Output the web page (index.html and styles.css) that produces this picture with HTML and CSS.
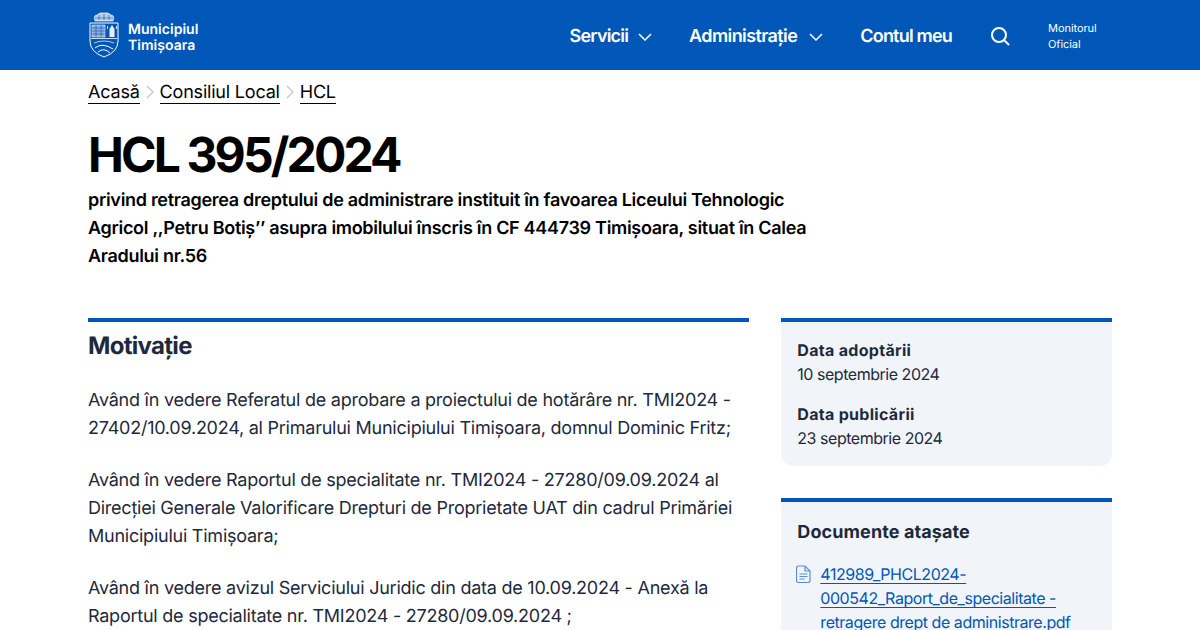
FILE: index.html
```html
<!DOCTYPE html>
<html lang="ro">
<head>
    <meta charset="UTF-8">
    <meta name="viewport" content="width=device-width, initial-scale=1.0">
    <title>HCL 395/2024 - Municipiul Timișoara</title>
    <link rel="stylesheet" href="styles.css">
</head>
<body>

    <header class="site-header">
        <div class="container header-inner">
            <a href="#" class="brand">
                <svg class="brand-crest" width="32" height="48" viewBox="0 0 32 48" fill="none" stroke="#fff">
                    <path d="M7 10 Q5 4 9 4 Q12 1 16 2 Q20 1 23 4 Q27 4 25 10 Z" fill="#b9cde9" stroke-width="0.6"/>
                    <path d="M7 7h18M11 4v5M16 3v6M21 4v5" stroke="#0057b8" stroke-width="0.6"/>
                    <path d="M2 12 H30 V30 Q30 41 16 46 Q2 41 2 30 Z" stroke-width="1"/>
                    <path d="M4 14 H17 V26 H4 Z" fill="#8fb0dd" stroke-width="0.5"/>
                    <path d="M4 17h13M4 20h13M4 23h13M8 14v12M13 14v12" stroke="#0057b8" stroke-width="0.6"/>
                    <path d="M24 14 L26.500 18 V26 H21.500 V18 Z" fill="#e8eff9" stroke="none"/>
                    <path d="M19.500 15v3M28.500 15v3" stroke-width="0.8"/>
                    <path d="M3 27.500 H29" stroke-width="0.8"/>
                    <path d="M6 32 Q16 28 26 32" stroke-width="0.7"/>
                    <path d="M7 37 Q14 31 25 38 M10 41 Q16 36 22 42" stroke-width="1"/>
                </svg>
                <span class="brand-name">Municipiul<br>Timișoara</span>
            </a>
            <nav class="main-nav">
                <a href="#" class="nav-link nav-services"><span>Servicii</span>
                    <svg width="14" height="8" viewBox="0 0 14 8" fill="none" stroke="#fff" stroke-width="1.5"><path d="M1 1l6 6 6-6"/></svg>
                </a>
                <a href="#" class="nav-link nav-admin"><span>Administrație</span>
                    <svg width="14" height="8" viewBox="0 0 14 8" fill="none" stroke="#fff" stroke-width="1.5"><path d="M1 1l6 6 6-6"/></svg>
                </a>
                <a href="#" class="nav-link nav-account">Contul meu</a>
                <a href="#" class="nav-search">
                    <svg width="20" height="20" viewBox="0 0 20 20" fill="none" stroke="#fff" stroke-width="2"><circle cx="9" cy="9" r="7"/><path d="M14 14l5 5"/></svg>
                </a>
                <a href="#" class="nav-monitor">Monitorul<br>Oficial</a>
            </nav>
        </div>
    </header>

    <main class="container">
        <div class="breadcrumbs">
            <a href="#">Acasă</a>
            <svg width="8" height="14" viewBox="0 0 8 14" fill="none" stroke="#c4c4c4" stroke-width="1.3"><path d="M1 1l6 6-6 6"/></svg>
            <a href="#">Consiliul Local</a>
            <svg width="8" height="14" viewBox="0 0 8 14" fill="none" stroke="#c4c4c4" stroke-width="1.3"><path d="M1 1l6 6-6 6"/></svg>
            <a href="#">HCL</a>
        </div>

        <h1 class="page-title">HCL 395/2024</h1>
        <p class="page-subtitle">privind retragerea dreptului de administrare instituit în favoarea Liceului Tehnologic Agricol ,,Petru Botiș’’ asupra imobilului înscris în CF 444739 Timișoara, situat în Calea Aradului nr.56</p>

        <div class="content-grid">
            <section class="motivation">
                <h2>Motivație</h2>
                <p>Având în vedere Referatul de aprobare a proiectului de hotărâre nr. TMI2024 - 27402/10.09.2024, al Primarului Municipiului Timișoara, domnul Dominic Fritz;</p>
                <p>Având în vedere Raportul de specialitate nr. TMI2024 - 27280/09.09.2024 al Direcției Generale Valorificare Drepturi de Proprietate UAT din cadrul Primăriei Municipiului Timișoara;</p>
                <p>Având în vedere avizul Serviciului Juridic din data de 10.09.2024 - Anexă la Raportul de specialitate nr. TMI2024 - 27280/09.09.2024 ;</p>
            </section>

            <aside class="sidebar">
                <div class="info-card dates-card">
                    <dl>
                        <dt>Data adoptării</dt>
                        <dd>10 septembrie 2024</dd>
                        <dt>Data publicării</dt>
                        <dd>23 septembrie 2024</dd>
                    </dl>
                </div>
                <div class="info-card docs-card">
                    <h3>Documente atașate</h3>
                    <div class="doc-item">
                        <svg width="15" height="18" viewBox="0 0 15 18" fill="none" stroke="#5a8fd6" stroke-width="1.2"><path d="M2.500 1H9l5 5v9.500a2 2 0 0 1-2 2H2.500a2 2 0 0 1-2-2V3a2 2 0 0 1 2-2Z"/><path d="M9 1v5h5M3.500 9h8M3.500 11.500h8M3.500 14h5"/></svg>
                        <a href="#">412989_PHCL2024-000542_Raport_de_specialitate - retragere drept de administrare.pdf</a>
                    </div>
                </div>
            </aside>
        </div>
    </main>

</body>
</html>
```

FILE: styles.css
```css
html, body {
    height: 630px;
    overflow: hidden;
}
body {
    margin: 0;
    font-family: 'Inter', 'Liberation Sans', sans-serif;
    color: #1e293b;
    background-color: #fff;
    text-rendering: geometricPrecision;
}
a {
    color: inherit;
    text-decoration: none;
}
.container {
    width: 1024px;
    margin: 0 auto;
}

/* Header */
.site-header {
    height: 70px;
    background-color: #0057b8;
    color: #fff;
}
.header-inner {
    height: 70px;
    display: flex;
    align-items: center;
    justify-content: space-between;
}
.brand {
    display: flex;
    align-items: center;
    gap: 8px;
}
.brand-name {
    margin-top: 6px;
    font-size: 14px;
    line-height: 16px;
    font-weight: 600;
    letter-spacing: 0.02px;
}
.main-nav {
    display: flex;
    align-items: center;
}
.nav-link {
    display: flex;
    align-items: center;
    gap: 10px;
    padding-top: 2px;
    font-size: 18px;
    font-weight: 600;
    letter-spacing: -0.8px;
}
.nav-link svg {
    margin-top: 1px;
}
.nav-services {
    margin-right: 37px;
}
.nav-admin {
    gap: 12px;
    margin-right: 37px;
    letter-spacing: -0.6px;
}
.nav-account {
    margin-right: 38px;
}
.nav-search {
    display: flex;
    margin-top: 2px;
    margin-right: 38px;
}
.nav-monitor {
    width: 64px;
    margin-top: 2px;
    font-size: 11px;
    line-height: 16px;
    letter-spacing: -0.05px;
}

/* Breadcrumbs */
.breadcrumbs {
    height: 24px;
    margin-top: 10px;
    display: flex;
    align-items: center;
    gap: 6px;
    font-size: 18px;
    letter-spacing: -0.2px;
    color: #000;
}
.breadcrumbs a {
    padding-top: 1px;
    line-height: 21px;
    border-bottom: 1px solid #000;
}

/* Title */
.page-title {
    margin: 23px 0 0;
    font-size: 48px;
    line-height: 56px;
    font-weight: 700;
    letter-spacing: -2.85px;
    color: #000;
}
.page-subtitle {
    width: 740px;
    margin: 4px 0 0;
    font-size: 18px;
    line-height: 28px;
    font-weight: 600;
    letter-spacing: -0.3px;
    color: #000;
}

/* Content */
.content-grid {
    margin-top: 47px;
    display: grid;
    grid-template-columns: 2fr 1fr;
    gap: 32px;
}
.motivation {
    border-top: 4px solid #0057b8;
}
.motivation h2 {
    margin: 6px 0 -1px;
    font-size: 24px;
    line-height: 36px;
    font-weight: 700;
    letter-spacing: -0.7px;
}
.motivation p {
    margin: 24px 0 0;
    font-size: 18px;
    line-height: 28px;
    letter-spacing: -0.24px;
}
.sidebar {
    display: flex;
    flex-direction: column;
    gap: 32px;
}
.info-card {
    background-color: #f1f5f9;
    border-top: 4px solid #0057b8;
    padding: 16px;
}
.dates-card {
    border-radius: 0 0 12px 12px;
}
.info-card dl {
    margin: 0;
}
.info-card dt {
    font-size: 16px;
    line-height: 24px;
    font-weight: 700;
    letter-spacing: 0.3px;
}
.info-card dd {
    margin: 0 0 16px;
    font-size: 16px;
    line-height: 24px;
    letter-spacing: -0.47px;
}
.info-card dd:last-child {
    margin-bottom: 0;
}
.docs-card h3 {
    margin: 1px 0 15px;
    font-size: 18px;
    line-height: 28px;
    font-weight: 700;
    letter-spacing: 0.1px;
}
.doc-item {
    display: flex;
    gap: 9px;
    align-items: flex-start;
    margin-left: -1px;
    font-size: 16px;
    line-height: 24px;
    letter-spacing: -0.45px;
}
.doc-item svg {
    flex-shrink: 0;
    margin-top: 3px;
}
.doc-item a {
    color: #0057b8;
    text-decoration: underline;
    text-underline-offset: 3px;
}
```
